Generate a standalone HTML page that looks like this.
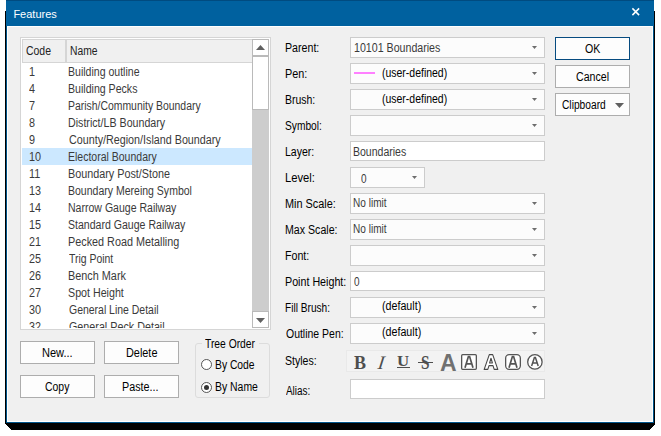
<!DOCTYPE html>
<html><head><meta charset="utf-8">
<style>
*{margin:0;padding:0;box-sizing:border-box}
html,body{width:661px;height:436px;overflow:hidden;background:#fff;position:relative;font-family:"Liberation Sans",sans-serif;font-size:12px;color:#000}
.a{position:absolute}
.t{position:absolute;white-space:nowrap;line-height:12px;transform-origin:0 0}
</style></head><body>
<div class="a" style="left:5px;top:11px;width:1px;height:413px;background:#000"></div>
<div class="a" style="left:654px;top:11px;width:1px;height:413px;background:#000"></div>
<svg class="a" style="left:0;top:420px" width="661" height="16"><polygon points="5,3 655,3 655,4 649,10 11,10 5,4" fill="#000" shape-rendering="crispEdges"/></svg>
<div class="a" style="left:6px;top:0px;width:648px;height:423px;background:#00619f"></div>
<div class="a" style="left:6px;top:0px;width:648px;height:1px;background:#004b80"></div>
<div class="a" style="left:6px;top:26px;width:1px;height:397px;background:#00548a"></div>
<div class="a" style="left:653px;top:26px;width:1px;height:397px;background:#00548a"></div>
<div class="a" style="left:6px;top:422px;width:648px;height:1px;background:#00548a"></div>
<div class="a" style="left:7px;top:26px;width:646px;height:396px;background:#fff"></div>
<div class="a" style="left:8px;top:27px;width:644px;height:394px;background:#f0f0f0"></div>
<div class="t" style="left:13.4px;top:8px;color:#fff;transform:scaleX(1.0);font-size:11px">Features</div>
<svg class="a" style="left:631px;top:7px" width="10" height="10"><path d="M1.4 1.4L8.1 8.1M8.1 1.4L1.4 8.1" stroke="#fff" stroke-width="1.5"/></svg>
<div class="a" style="left:20px;top:37px;width:251px;height:293px;border:1px solid #d5d5d5;background:#fff"></div>
<div class="a" style="left:22px;top:39px;width:230px;height:24px;border:1px solid #d5d5d5;border-right:none;background:#f0f0f0"></div>
<div class="a" style="left:65px;top:40px;width:2px;height:22px;background:#d5d5d5"></div>
<div class="t" style="left:26.17px;top:45px;color:#222;transform:scaleX(0.8714);">Code</div>
<div class="t" style="left:69.71px;top:45px;color:#222;transform:scaleX(0.8581);">Name</div>
<div class="a" style="left:252px;top:39px;width:17px;height:289px;background:#cdcdcd"></div>
<div class="a" style="left:252px;top:39px;width:17px;height:17px;border:1px solid #bababa;background:#fff"></div>
<svg class="a" style="left:255px;top:43px" width="11" height="8"><polygon points="1,7 5.5,2 10,7" fill="#606060"/></svg>
<div class="a" style="left:252px;top:56px;width:17px;height:54px;border:1px solid #bababa;background:#fff"></div>
<div class="a" style="left:252px;top:311px;width:17px;height:17px;border:1px solid #bababa;background:#fff"></div>
<svg class="a" style="left:255px;top:317px" width="11" height="8"><polygon points="1,1 5.5,6 10,1" fill="#606060"/></svg>
<div class="a" style="left:22px;top:63px;width:230px;height:265px;overflow:hidden">
<div class="t" style="left:7px;top:3px;color:#3a3a3a;transform:scaleX(0.9)">1</div>
<div class="t" style="left:45.86px;top:3px;color:#3a3a3a;transform:scaleX(0.8788)">Building outline</div>
<div class="t" style="left:7px;top:20px;color:#3a3a3a;transform:scaleX(0.9)">4</div>
<div class="t" style="left:45.85px;top:20px;color:#3a3a3a;transform:scaleX(0.8821)">Building Pecks</div>
<div class="t" style="left:7px;top:37px;color:#3a3a3a;transform:scaleX(0.9)">7</div>
<div class="t" style="left:45.87px;top:37px;color:#3a3a3a;transform:scaleX(0.8684)">Parish/Community Boundary</div>
<div class="t" style="left:7px;top:54px;color:#3a3a3a;transform:scaleX(0.9)">8</div>
<div class="t" style="left:45.85px;top:54px;color:#3a3a3a;transform:scaleX(0.8881)">District/LB Boundary</div>
<div class="t" style="left:7px;top:71px;color:#3a3a3a;transform:scaleX(0.9)">9</div>
<div class="t" style="left:46.73px;top:71px;color:#3a3a3a;transform:scaleX(0.8953)">County/Region/Island Boundary</div>
<div class="a" style="left:0;top:85px;width:230px;height:17px;background:#cce8ff"></div>
<div class="t" style="left:7px;top:88px;color:#3a3a3a;transform:scaleX(0.9)">10</div>
<div class="t" style="left:45.86px;top:88px;color:#3a3a3a;transform:scaleX(0.8752)">Electoral Boundary</div>
<div class="t" style="left:7px;top:105px;color:#3a3a3a;transform:scaleX(0.9)">11</div>
<div class="t" style="left:45.83px;top:105px;color:#3a3a3a;transform:scaleX(0.9000)">Boundary Post/Stone</div>
<div class="t" style="left:7px;top:122px;color:#3a3a3a;transform:scaleX(0.9)">13</div>
<div class="t" style="left:45.86px;top:122px;color:#3a3a3a;transform:scaleX(0.8764)">Boundary Mereing Symbol</div>
<div class="t" style="left:7px;top:139px;color:#3a3a3a;transform:scaleX(0.9)">14</div>
<div class="t" style="left:45.86px;top:139px;color:#3a3a3a;transform:scaleX(0.8780)">Narrow Gauge Railway</div>
<div class="t" style="left:7px;top:156px;color:#3a3a3a;transform:scaleX(0.9)">15</div>
<div class="t" style="left:45.86px;top:156px;color:#3a3a3a;transform:scaleX(0.8797)">Standard Gauge Railway</div>
<div class="t" style="left:7px;top:173px;color:#3a3a3a;transform:scaleX(0.9)">21</div>
<div class="t" style="left:45.83px;top:173px;color:#3a3a3a;transform:scaleX(0.9016)">Pecked Road Metalling</div>
<div class="t" style="left:7px;top:190px;color:#3a3a3a;transform:scaleX(0.9)">25</div>
<div class="t" style="left:46.74px;top:190px;color:#3a3a3a;transform:scaleX(0.8686)">Trig Point</div>
<div class="t" style="left:7px;top:207px;color:#3a3a3a;transform:scaleX(0.9)">26</div>
<div class="t" style="left:45.82px;top:207px;color:#3a3a3a;transform:scaleX(0.9048)">Bench Mark</div>
<div class="t" style="left:7px;top:224px;color:#3a3a3a;transform:scaleX(0.9)">27</div>
<div class="t" style="left:45.84px;top:224px;color:#3a3a3a;transform:scaleX(0.8903)">Spot Height</div>
<div class="t" style="left:7px;top:241px;color:#3a3a3a;transform:scaleX(0.9)">30</div>
<div class="t" style="left:46.74px;top:241px;color:#3a3a3a;transform:scaleX(0.8716)">General Line Detail</div>
<div class="t" style="left:7px;top:258px;color:#3a3a3a;transform:scaleX(0.9)">32</div>
<div class="t" style="left:46.73px;top:258px;color:#3a3a3a;transform:scaleX(0.8962)">General Peck Detail</div>
</div>
<div class="a" style="left:20px;top:341px;width:75px;height:23px;border:1px solid #adadad;background:#fdfdfd"></div>
<div class="t" style="left:41.87px;top:347px;color:#000;transform:scaleX(0.9187);">New...</div>
<div class="a" style="left:104px;top:341px;width:75px;height:23px;border:1px solid #adadad;background:#fdfdfd"></div>
<div class="t" style="left:125.58px;top:347px;color:#000;transform:scaleX(0.9061);">Delete</div>
<div class="a" style="left:20px;top:375px;width:75px;height:23px;border:1px solid #adadad;background:#fdfdfd"></div>
<div class="t" style="left:44.57px;top:381px;color:#000;transform:scaleX(0.8714);">Copy</div>
<div class="a" style="left:104px;top:375px;width:75px;height:23px;border:1px solid #adadad;background:#fdfdfd"></div>
<div class="t" style="left:122.48px;top:381px;color:#000;transform:scaleX(0.8974);">Paste...</div>
<div class="a" style="left:195px;top:343px;width:75px;height:55px;border:1px solid #dcdcdc;border-radius:3px"></div>
<div class="a" style="left:202px;top:337px;width:57px;height:12px;background:#f0f0f0"></div>
<div class="t" style="left:205.47px;top:338px;color:#000;transform:scaleX(0.8586);">Tree Order</div>
<svg class="a" style="left:200px;top:358px" width="13" height="36"><circle cx="6.5" cy="6.5" r="5" fill="#fff" stroke="#444" stroke-width="0.9"/><circle cx="6.5" cy="29.5" r="5" fill="#fff" stroke="#444" stroke-width="0.9"/><circle cx="6.5" cy="29.5" r="2.5" fill="#333"/></svg>
<div class="t" style="left:214.71px;top:359px;color:#000;transform:scaleX(0.86);">By Code</div>
<div class="t" style="left:214.71px;top:381px;color:#000;transform:scaleX(0.8688);">By Name</div>
<div class="t" style="left:284.89px;top:42px;color:#000;transform:scaleX(0.8865);">Parent:</div>
<div class="t" style="left:284.88px;top:68px;color:#000;transform:scaleX(0.9043);">Pen:</div>
<div class="t" style="left:284.9px;top:94px;color:#000;transform:scaleX(0.8727);">Brush:</div>
<div class="t" style="left:284.92px;top:120px;color:#000;transform:scaleX(0.85);">Symbol:</div>
<div class="t" style="left:284.9px;top:146px;color:#000;transform:scaleX(0.8781);">Layer:</div>
<div class="t" style="left:284.85px;top:172px;color:#000;transform:scaleX(0.9367);">Level:</div>
<div class="t" style="left:284.87px;top:198px;color:#000;transform:scaleX(0.9074);">Min Scale:</div>
<div class="t" style="left:284.89px;top:224px;color:#000;transform:scaleX(0.8845);">Max Scale:</div>
<div class="t" style="left:284.89px;top:250px;color:#000;transform:scaleX(0.8885);">Font:</div>
<div class="t" style="left:284.89px;top:276px;color:#000;transform:scaleX(0.8925);">Point Height:</div>
<div class="t" style="left:284.92px;top:302px;color:#000;transform:scaleX(0.8442);">Fill Brush:</div>
<div class="t" style="left:285.77px;top:328px;color:#000;transform:scaleX(0.8723);">Outline Pen:</div>
<div class="t" style="left:284.9px;top:355px;color:#000;transform:scaleX(0.8794);">Styles:</div>
<div class="t" style="left:285.77px;top:385px;color:#000;transform:scaleX(0.8276);">Alias:</div>
<div class="a" style="left:350px;top:37px;width:195px;height:21px;border:1px solid #cccccc;background:#fcfcfc"></div>
<svg class="a" style="left:532px;top:46px" width="7" height="4"><polygon points="0,0 5,0 2.5,3" fill="#6d6d6d"/></svg>
<div class="t" style="left:354.09px;top:42px;color:#3a3a3a;transform:scaleX(0.8865);">10101 Boundaries</div>
<div class="a" style="left:350px;top:63px;width:195px;height:21px;border:1px solid #cccccc;background:#fcfcfc"></div>
<svg class="a" style="left:532px;top:72px" width="7" height="4"><polygon points="0,0 5,0 2.5,3" fill="#6d6d6d"/></svg>
<div class="t" style="left:381.9px;top:67px;color:#000;transform:scaleX(0.8726);">(user-defined)</div>
<div class="a" style="left:354px;top:72px;width:21px;height:2px;background:#ff80ff"></div>
<div class="a" style="left:350px;top:89px;width:195px;height:21px;border:1px solid #cccccc;background:#fcfcfc"></div>
<svg class="a" style="left:532px;top:98px" width="7" height="4"><polygon points="0,0 5,0 2.5,3" fill="#6d6d6d"/></svg>
<div class="t" style="left:381.9px;top:93px;color:#000;transform:scaleX(0.8726);">(user-defined)</div>
<div class="a" style="left:350px;top:115px;width:195px;height:21px;border:1px solid #cccccc;background:#fcfcfc"></div>
<svg class="a" style="left:532px;top:124px" width="7" height="4"><polygon points="0,0 5,0 2.5,3" fill="#6d6d6d"/></svg>
<div class="a" style="left:350px;top:141px;width:195px;height:20px;border:1px solid #cccccc;background:#fff"></div>
<div class="t" style="left:352.9px;top:146px;color:#3a3a3a;transform:scaleX(0.8767);">Boundaries</div>
<div class="a" style="left:350px;top:167px;width:75px;height:21px;border:1px solid #cccccc;background:#fcfcfc"></div>
<svg class="a" style="left:412px;top:176px" width="7" height="4"><polygon points="0,0 5,0 2.5,3" fill="#6d6d6d"/></svg>
<div class="t" style="left:361.17px;top:173px;color:#3a3a3a;transform:scaleX(0.8333);">0</div>
<div class="a" style="left:350px;top:193px;width:195px;height:21px;border:1px solid #cccccc;background:#fcfcfc"></div>
<svg class="a" style="left:532px;top:202px" width="7" height="4"><polygon points="0,0 5,0 2.5,3" fill="#6d6d6d"/></svg>
<div class="t" style="left:353.33px;top:197px;color:#3a3a3a;transform:scaleX(0.8385);">No limit</div>
<div class="a" style="left:350px;top:219px;width:195px;height:21px;border:1px solid #cccccc;background:#fcfcfc"></div>
<svg class="a" style="left:532px;top:228px" width="7" height="4"><polygon points="0,0 5,0 2.5,3" fill="#6d6d6d"/></svg>
<div class="t" style="left:353.33px;top:223px;color:#3a3a3a;transform:scaleX(0.8385);">No limit</div>
<div class="a" style="left:350px;top:245px;width:195px;height:21px;border:1px solid #cccccc;background:#fcfcfc"></div>
<svg class="a" style="left:532px;top:254px" width="7" height="4"><polygon points="0,0 5,0 2.5,3" fill="#6d6d6d"/></svg>
<div class="a" style="left:350px;top:271px;width:195px;height:20px;border:1px solid #cccccc;background:#fff"></div>
<div class="t" style="left:354.17px;top:276px;color:#3a3a3a;transform:scaleX(0.8333);">0</div>
<div class="a" style="left:350px;top:297px;width:195px;height:21px;border:1px solid #cccccc;background:#fcfcfc"></div>
<svg class="a" style="left:532px;top:306px" width="7" height="4"><polygon points="0,0 5,0 2.5,3" fill="#6d6d6d"/></svg>
<div class="t" style="left:381.69px;top:300px;color:#000;transform:scaleX(0.8907);">(default)</div>
<div class="a" style="left:350px;top:323px;width:195px;height:21px;border:1px solid #cccccc;background:#fcfcfc"></div>
<svg class="a" style="left:532px;top:332px" width="7" height="4"><polygon points="0,0 5,0 2.5,3" fill="#6d6d6d"/></svg>
<div class="t" style="left:381.69px;top:326px;color:#000;transform:scaleX(0.8907);">(default)</div>
<div class="a" style="left:350px;top:379px;width:195px;height:20px;border:1px solid #cccccc;background:#fff"></div>
<div class="a" style="left:346px;top:350px;width:199px;height:22px;border:1px solid #e9e9e9;background:#f3f3f3"></div>
<div class="a" style="left:354px;top:354px;white-space:nowrap;font:bold 18px/18px 'Liberation Serif',serif;color:#4e4e4e">B</div>
<div class="a" style="left:378px;top:354px;white-space:nowrap;font:italic 19px/18px 'Liberation Serif',serif;color:#4e4e4e;transform:skewX(-8deg)">I</div>
<div class="a" style="left:396.5px;top:354px;white-space:nowrap;font:bold 15px/15px 'Liberation Serif',serif;color:#4e4e4e;transform:scaleX(1.12);transform-origin:0 0">U</div>
<div class="a" style="left:397px;top:367px;width:13px;height:1px;background:#4e4e4e"></div>
<div class="a" style="left:420.5px;top:354px;white-space:nowrap;font:18px/18px 'Liberation Serif',serif;font-weight:bold;color:#4e4e4e;transform:scaleX(0.85);transform-origin:0 0">S</div>
<div class="a" style="left:418px;top:362px;width:15px;height:1px;background:#4e4e4e"></div>
<div class="a" style="left:440px;top:352px;white-space:nowrap;font:bold 23px/23px 'Liberation Sans',sans-serif;color:#707070">A</div>
<svg class="a" style="left:0;top:0" width="661" height="436" viewBox="0 0 661 436">
<rect x="461.65" y="354.65" width="14.7" height="14.7" rx="1" fill="#fff" stroke="#555" stroke-width="1.3"/>
<path d="M465 367.8 L468.4 356.6 H469.6 L473 367.8 M466.2 363.8 H471.8" fill="none" stroke="#555" stroke-width="1.7"/>
<path d="M484.2 369.4 L489.3 354.6 H492.7 L497.8 369.4 H494.2 L493 365.6 H489 L487.8 369.4 Z M489.6 363 L491 358.2 L492.4 363 Z" fill="#fff" stroke="#484848" stroke-width="1.1" stroke-linejoin="round"/>
<rect x="505.65" y="354.65" width="14.7" height="14.7" rx="3.5" fill="#fff" stroke="#555" stroke-width="1.3"/>
<path d="M509 367.8 L512.4 356.6 H513.6 L517 367.8 M510.2 363.8 H515.8" fill="none" stroke="#555" stroke-width="1.7"/>
<circle cx="534.9" cy="361.9" r="7.2" fill="#fff" stroke="#555" stroke-width="1.3"/>
<path d="M531.6 366 L534.4 357.4 H535.4 L538.2 366 M532.6 362.9 H537.2" fill="none" stroke="#555" stroke-width="1.5"/>
</svg>
<div class="a" style="left:555px;top:37px;width:75px;height:23px;border:1px solid #064b80;background:#fdfdfd"></div>
<div class="t" style="left:584.88px;top:43px;color:#000;transform:scaleX(0.8824);">OK</div>
<div class="a" style="left:555px;top:65px;width:75px;height:23px;border:1px solid #adadad;background:#fdfdfd"></div>
<div class="t" style="left:575.68px;top:71px;color:#000;transform:scaleX(0.8838);">Cancel</div>
<div class="a" style="left:555px;top:93px;width:75px;height:23px;border:1px solid #adadad;background:#fdfdfd"></div>
<div class="t" style="left:561.77px;top:99px;color:#000;transform:scaleX(0.851);">Clipboard</div>
<svg class="a" style="left:615px;top:103px" width="10" height="6"><polygon points="0,0 9,0 4.5,5" fill="#606060"/></svg>
</body></html>
